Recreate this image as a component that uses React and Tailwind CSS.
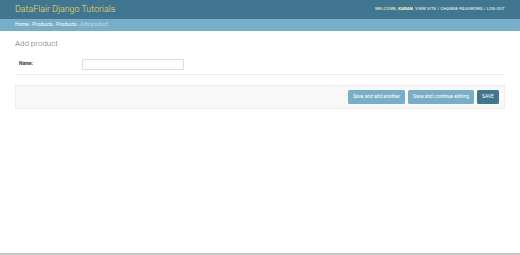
import React from 'react';

export default function App() {
  return (
    <div className="h-[255px] w-full flex flex-col bg-white" style={{ fontFamily: 'Roboto, "Liberation Sans", sans-serif' }}>
      <div className="h-[19px] bg-[#417690] flex items-center justify-between px-[15px]">
        <div className="text-[8.9px] text-[#f5dd5d] font-light leading-none">DataFlair Django Tutorials</div>
        <div className="text-[4.3px] text-[#ffc] uppercase leading-none tracking-[0.1px]">
          Welcome, <strong className="font-bold text-[#ffc]">Karan</strong>. <span className="text-white">View site</span> / <span className="text-white">Change password</span> / <span className="text-white">Log out</span>
        </div>
      </div>
      <div className="h-[12px] bg-[#79aec8] flex items-center px-[15px] text-[5.1px] text-[#c4dce8] leading-none">
        <span className="text-white">Home</span>
        <span className="mx-[1px]">›</span>
        <span className="text-white">Products</span>
        <span className="mx-[1px]">›</span>
        <span className="text-white">Products</span>
        <span className="mx-[1px]">›</span>
        <span>Add product</span>
      </div>
      <div className="flex-1 px-[15px]">
        <h1 className="mt-[9px] text-[8px] font-light text-[#666] leading-none">Add product</h1>
        <div className="mt-[7px] h-[20px] flex items-center border-b border-[#eee] pl-[4px]">
          <label className="w-[63px] text-[4.8px] font-bold text-[#333] leading-none">Name:</label>
          <div className="w-[102px] h-[11px] border border-[#ddd] rounded-[1px] bg-white"></div>
        </div>
        <div className="mt-[10px] h-[24px] bg-[#f8f8f8] border border-[#eee] flex items-center justify-end gap-[3px] pr-[5px]">
          <div className="h-[14px] w-[57px] bg-[#79aec8] rounded-[1.5px] text-white text-[4.9px] flex items-center justify-center">Save and add another</div>
          <div className="h-[14px] w-[66px] bg-[#79aec8] rounded-[1.5px] text-white text-[4.9px] flex items-center justify-center">Save and continue editing</div>
          <div className="h-[14px] w-[22px] bg-[#417690] rounded-[1.5px] text-white text-[4.9px] flex items-center justify-center">SAVE</div>
        </div>
      </div>
      <div className="h-[2px] bg-[#c3c9c9]"></div>
    </div>
  );
}
